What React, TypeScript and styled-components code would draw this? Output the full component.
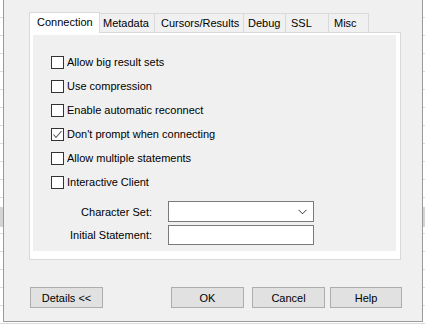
import React from 'react'
import styled, { createGlobalStyle } from 'styled-components'

const GlobalStyle = createGlobalStyle`
    html, body {
        margin: 0;
        padding: 0;
        background: #ffffff;
    }
    body {
        font-family: "Liberation Sans", Arial, sans-serif;
        font-size: 11px;
        color: #000000;
    }
`

const tabs = [
    { label: 'Connection', width: 71, pad: 7 },
    { label: 'Metadata', width: 56, pad: 3 },
    { label: 'Cursors/Results', width: 90, pad: 6 },
    { label: 'Debug', width: 43, pad: 4 },
    { label: 'SSL', width: 44, pad: 5 },
    { label: 'Misc', width: 41, pad: 5 },
]

const options = [
    { label: 'Allow big result sets', checked: false },
    { label: 'Use compression', checked: false },
    { label: 'Enable automatic reconnect', checked: false },
    { label: "Don't prompt when connecting", checked: true },
    { label: 'Allow multiple statements', checked: false },
    { label: 'Interactive Client', checked: false },
]

const CheckBox: React.FC<{ checked: boolean }> = ({ checked }) => (
    <Box>
        {checked && (
            <svg width="11" height="11" viewBox="0 0 11 11">
                <polyline points="1.5,5.5 4,8.5 9.5,2" fill="none" stroke="#555" strokeWidth="1.1" />
            </svg>
        )}
    </Box>
)

const App: React.FC = () => {
    return (
        <>
            <GlobalStyle />
            <Backdrop>
                <Dialog>
                    <TabStrip>
                        {tabs.map((t, i) => (
                            <Tab key={t.label} selected={i === 0} width={t.width} pad={t.pad}>
                                {t.label}
                            </Tab>
                        ))}
                    </TabStrip>

                    <Panel>
                        <Page>
                            {options.map(o => (
                                <OptionRow key={o.label}>
                                    <CheckBox checked={o.checked} />
                                    <OptionLabel>{o.label}</OptionLabel>
                                </OptionRow>
                            ))}

                            <Form>
                                <FieldLabel>Character Set:</FieldLabel>
                                <Select>
                                    <svg width="9" height="6" viewBox="0 0 9 6">
                                        <polyline points="0.5,0.8 4.5,4.8 8.5,0.8" fill="none" stroke="#333" strokeWidth="1" />
                                    </svg>
                                </Select>
                                <FieldLabel>Initial Statement:</FieldLabel>
                                <TextInput />
                            </Form>
                        </Page>
                    </Panel>

                    <ButtonRow>
                        <Button>Details &lt;&lt;</Button>
                        <Button gap={68}>OK</Button>
                        <Button gap={8}>Cancel</Button>
                        <Button gap={5} width={72}>Help</Button>
                    </ButtonRow>
                </Dialog>
            </Backdrop>
        </>
    )
}

export default App

const Backdrop = styled.div`
    width: 425px;
    height: 324px;
    overflow: hidden;
    background-color: #ffffff;
    background-image:
        linear-gradient(to bottom, transparent 207px, #d4d4d4 207px, #d4d4d4 227px, transparent 227px),
        repeating-linear-gradient(to bottom, transparent 0, transparent 17px, #dcdcdc 17px, #dcdcdc 18px);
`

const Dialog = styled.div`
    box-sizing: border-box;
    width: 420px;
    height: 322px;
    margin-left: 3px;
    border: 1px solid #9a9a9a;
    border-top: none;
    background: #f0f0f0;
    padding: 12px 0 0 25px;
    display: flex;
    flex-direction: column;
`

const TabStrip = styled.div`
    display: flex;
    align-items: flex-end;
    height: 20px;
    position: relative;
    z-index: 1;
`

const Tab = styled.div<{ selected: boolean, width: number, pad: number }>`
    box-sizing: border-box;
    width: ${p => p.width}px;
    height: ${p => (p.selected ? 21 : 19)}px;
    margin-bottom: ${p => (p.selected ? -1 : 0)}px;
    margin-left: ${p => (p.selected ? 0 : -1)}px;
    padding-left: ${p => p.pad}px;
    padding-top: ${p => (p.selected ? 3 : 3)}px;
    border: 1px solid #d9d9d9;
    border-bottom: none;
    background: ${p => (p.selected ? '#ffffff' : '#f0f0f0')};
    white-space: nowrap;
    line-height: 13px;
    order: 0;
    ${p => p.selected && 'z-index: 2; position: relative;'}
    &:nth-child(2) { margin-left: -1px; }
`

const Panel = styled.div`
    box-sizing: border-box;
    width: 372px;
    height: 228px;
    border: 1px solid #d9d9d9;
    background: #ffffff;
    padding: 2px 4px 8px 3px;
    display: flex;
`

const Page = styled.div`
    flex: 1;
    background: #f0f0f0;
    padding: 15px 0 0 18px;
`

const OptionRow = styled.div`
    display: flex;
    align-items: flex-start;
    height: 24px;
`

const Box = styled.div`
    box-sizing: border-box;
    width: 13px;
    height: 13px;
    margin-top: 6px;
    border: 1px solid #333333;
    background: #ffffff;
    display: flex;
    align-items: center;
    justify-content: center;
`

const OptionLabel = styled.span`
    margin-left: 3px;
    line-height: 25px;
    white-space: nowrap;
`

const Form = styled.div`
    display: grid;
    grid-template-columns: 119px 146px;
    column-gap: 16px;
    row-gap: 3px;
    margin: 7px 0 0 -18px;
`

const FieldLabel = styled.div`
    text-align: right;
    align-self: center;
    white-space: nowrap;
`

const Select = styled.div`
    box-sizing: border-box;
    height: 21px;
    border: 1px solid #7a7a7a;
    background: #ffffff;
    display: flex;
    align-items: center;
    justify-content: flex-end;
    padding: 1px 6px 0 0;
`

const TextInput = styled.div`
    box-sizing: border-box;
    height: 20px;
    border: 1px solid #7a7a7a;
    background: #ffffff;
`

const ButtonRow = styled.div`
    display: flex;
    margin: 27px 0 0 1px;
`

const Button = styled.div<{ gap?: number, width?: number }>`
    box-sizing: border-box;
    width: ${p => p.width ?? 73}px;
    height: 21px;
    margin-left: ${p => p.gap ?? 0}px;
    border: 1px solid #adadad;
    background: #e1e1e1;
    display: flex;
    align-items: center;
    justify-content: center;
    white-space: nowrap;
`
